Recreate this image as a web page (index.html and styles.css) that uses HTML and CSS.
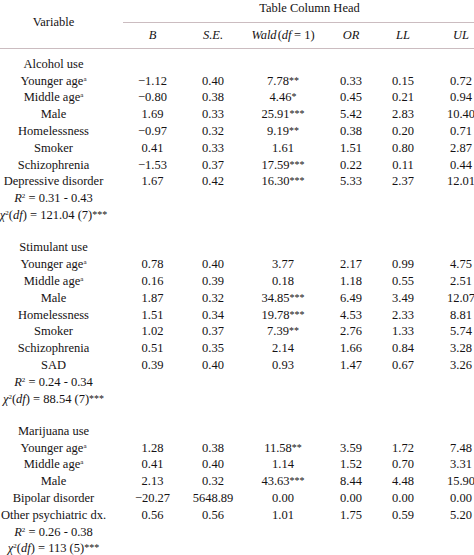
FILE: index.html
```html
<!DOCTYPE html>
<html>
<head>
<meta charset="utf-8">
<link rel="stylesheet" href="styles.css">
</head>
<body>
<div class="frame">
<table class="tbl">
  <colgroup>
    <col class="c-var"><col class="c-b"><col class="c-se"><col class="c-wald"><col class="c-or"><col class="c-ll"><col class="c-ul">
  </colgroup>
  <thead>
    <tr class="h1">
      <th rowspan="2" class="var-head">Variable</th>
      <th colspan="6" class="span-head">Table Column Head</th>
    </tr>
    <tr class="h2">
      <th><i>B</i></th>
      <th><i>S.E.</i></th>
      <th><i>Wald</i><span class="paren">(</span><i>df</i>&thinsp;= 1)</th>
      <th><i>OR</i></th>
      <th><i>LL</i></th>
      <th><i>UL</i></th>
    </tr>
  </thead>
  <tbody>
    <tr class="gap-top"><td colspan="7"></td></tr>
    <tr><td>Alcohol use</td><td></td><td></td><td></td><td></td><td></td><td></td></tr>
    <tr><td>Younger age<sup>a</sup></td><td>−1.12</td><td>0.40</td><td>7.78<span class="ast">**</span></td><td>0.33</td><td>0.15</td><td>0.72</td></tr>
    <tr><td>Middle age<sup>a</sup></td><td>−0.80</td><td>0.38</td><td>4.46<span class="ast">*</span></td><td>0.45</td><td>0.21</td><td>0.94</td></tr>
    <tr><td>Male</td><td>1.69</td><td>0.33</td><td>25.91<span class="ast">***</span></td><td>5.42</td><td>2.83</td><td>10.40</td></tr>
    <tr><td>Homelessness</td><td>−0.97</td><td>0.32</td><td>9.19<span class="ast">**</span></td><td>0.38</td><td>0.20</td><td>0.71</td></tr>
    <tr><td>Smoker</td><td>0.41</td><td>0.33</td><td>1.61</td><td>1.51</td><td>0.80</td><td>2.87</td></tr>
    <tr><td>Schizophrenia</td><td>−1.53</td><td>0.37</td><td>17.59<span class="ast">***</span></td><td>0.22</td><td>0.11</td><td>0.44</td></tr>
    <tr><td>Depressive disorder</td><td>1.67</td><td>0.42</td><td>16.30<span class="ast">***</span></td><td>5.33</td><td>2.37</td><td>12.01</td></tr>
    <tr><td><i>R</i><sup>2</sup> = 0.31 - 0.43</td><td></td><td></td><td></td><td></td><td></td><td></td></tr>
    <tr><td><i>χ</i><sup>2</sup>(<i>df</i>) = 121.04 (7)<span class="ast">***</span></td><td></td><td></td><td></td><td></td><td></td><td></td></tr>
    <tr class="gap"><td colspan="7"></td></tr>
    <tr><td>Stimulant use</td><td></td><td></td><td></td><td></td><td></td><td></td></tr>
    <tr><td>Younger age<sup>a</sup></td><td>0.78</td><td>0.40</td><td>3.77</td><td>2.17</td><td>0.99</td><td>4.75</td></tr>
    <tr><td>Middle age<sup>a</sup></td><td>0.16</td><td>0.39</td><td>0.18</td><td>1.18</td><td>0.55</td><td>2.51</td></tr>
    <tr><td>Male</td><td>1.87</td><td>0.32</td><td>34.85<span class="ast">***</span></td><td>6.49</td><td>3.49</td><td>12.07</td></tr>
    <tr><td>Homelessness</td><td>1.51</td><td>0.34</td><td>19.78<span class="ast">***</span></td><td>4.53</td><td>2.33</td><td>8.81</td></tr>
    <tr><td>Smoker</td><td>1.02</td><td>0.37</td><td>7.39<span class="ast">**</span></td><td>2.76</td><td>1.33</td><td>5.74</td></tr>
    <tr><td>Schizophrenia</td><td>0.51</td><td>0.35</td><td>2.14</td><td>1.66</td><td>0.84</td><td>3.28</td></tr>
    <tr><td>SAD</td><td>0.39</td><td>0.40</td><td>0.93</td><td>1.47</td><td>0.67</td><td>3.26</td></tr>
    <tr><td><i>R</i><sup>2</sup> = 0.24 - 0.34</td><td></td><td></td><td></td><td></td><td></td><td></td></tr>
    <tr><td><i>χ</i><sup>2</sup>(<i>df</i>) = 88.54 (7)<span class="ast">***</span></td><td></td><td></td><td></td><td></td><td></td><td></td></tr>
    <tr class="gap"><td colspan="7"></td></tr>
    <tr><td>Marijuana use</td><td></td><td></td><td></td><td></td><td></td><td></td></tr>
    <tr><td>Younger age<sup>a</sup></td><td>1.28</td><td>0.38</td><td>11.58<span class="ast">**</span></td><td>3.59</td><td>1.72</td><td>7.48</td></tr>
    <tr><td>Middle age<sup>a</sup></td><td>0.41</td><td>0.40</td><td>1.14</td><td>1.52</td><td>0.70</td><td>3.31</td></tr>
    <tr><td>Male</td><td>2.13</td><td>0.32</td><td>43.63<span class="ast">***</span></td><td>8.44</td><td>4.48</td><td>15.90</td></tr>
    <tr><td>Bipolar disorder</td><td>−20.27</td><td>5648.89</td><td>0.00</td><td>0.00</td><td>0.00</td><td>0.00</td></tr>
    <tr><td>Other psychiatric dx.</td><td>0.56</td><td>0.56</td><td>1.01</td><td>1.75</td><td>0.59</td><td>5.20</td></tr>
    <tr><td><i>R</i><sup>2</sup> = 0.26 - 0.38</td><td></td><td></td><td></td><td></td><td></td><td></td></tr>
    <tr><td><i>χ</i><sup>2</sup>(<i>df</i>) = 113 (5)<span class="ast">***</span></td><td></td><td></td><td></td><td></td><td></td><td></td></tr>
  </tbody>
</table>
</div>
</body>
</html>
```

FILE: styles.css
```css
html, body {
  margin: 0;
  padding: 0;
  background: #ffffff;
  overflow: hidden;
}

.frame {
  width: 474px;
  height: 555px;
  overflow: hidden;
}

.tbl {
  margin-left: -16px;
  border-collapse: collapse;
  table-layout: fixed;
  width: 512px;
  font-family: "Liberation Serif", "Times New Roman", serif;
  font-size: 12.5px;
  color: #151213;
}

.c-var { width: 139px; }
.c-b { width: 59px; }
.c-se { width: 62px; }
.c-wald { width: 78px; }
.c-or { width: 58px; }
.c-ll { width: 46px; }
.c-ul { width: 70px; }

.tbl th,
.tbl td {
  padding: 0;
  text-align: center;
  white-space: nowrap;
  font-weight: normal;
}

.h1 th {
  height: 21px;
  vertical-align: top;
  line-height: 15px;
  padding-top: 1px;
}

.span-head {
  border-bottom: 1px solid #cbbcc0;
}

.var-head {
  vertical-align: middle !important;
  padding-top: 0 !important;
  border-bottom: 1px solid #cbbcc0;
  padding-bottom: 4px !important;
}

.h2 th {
  height: 25px;
  line-height: 15px;
  vertical-align: middle;
  border-bottom: 1px solid #cbbcc0;
}

.paren {
  margin-left: 1px;
}

.tbl tbody td {
  height: 16.8px;
  line-height: 13px;
  vertical-align: middle;
}

.tbl tbody tr.gap-top td {
  height: 7px;
  line-height: 0;
}

.tbl tbody tr.gap td {
  height: 15.5px;
  line-height: 0;
}

sup {
  font-size: 7px;
  line-height: 0;
  vertical-align: 4px;
}

.ast {
  font-size: 10px;
  position: relative;
  top: -1px;
}
```
